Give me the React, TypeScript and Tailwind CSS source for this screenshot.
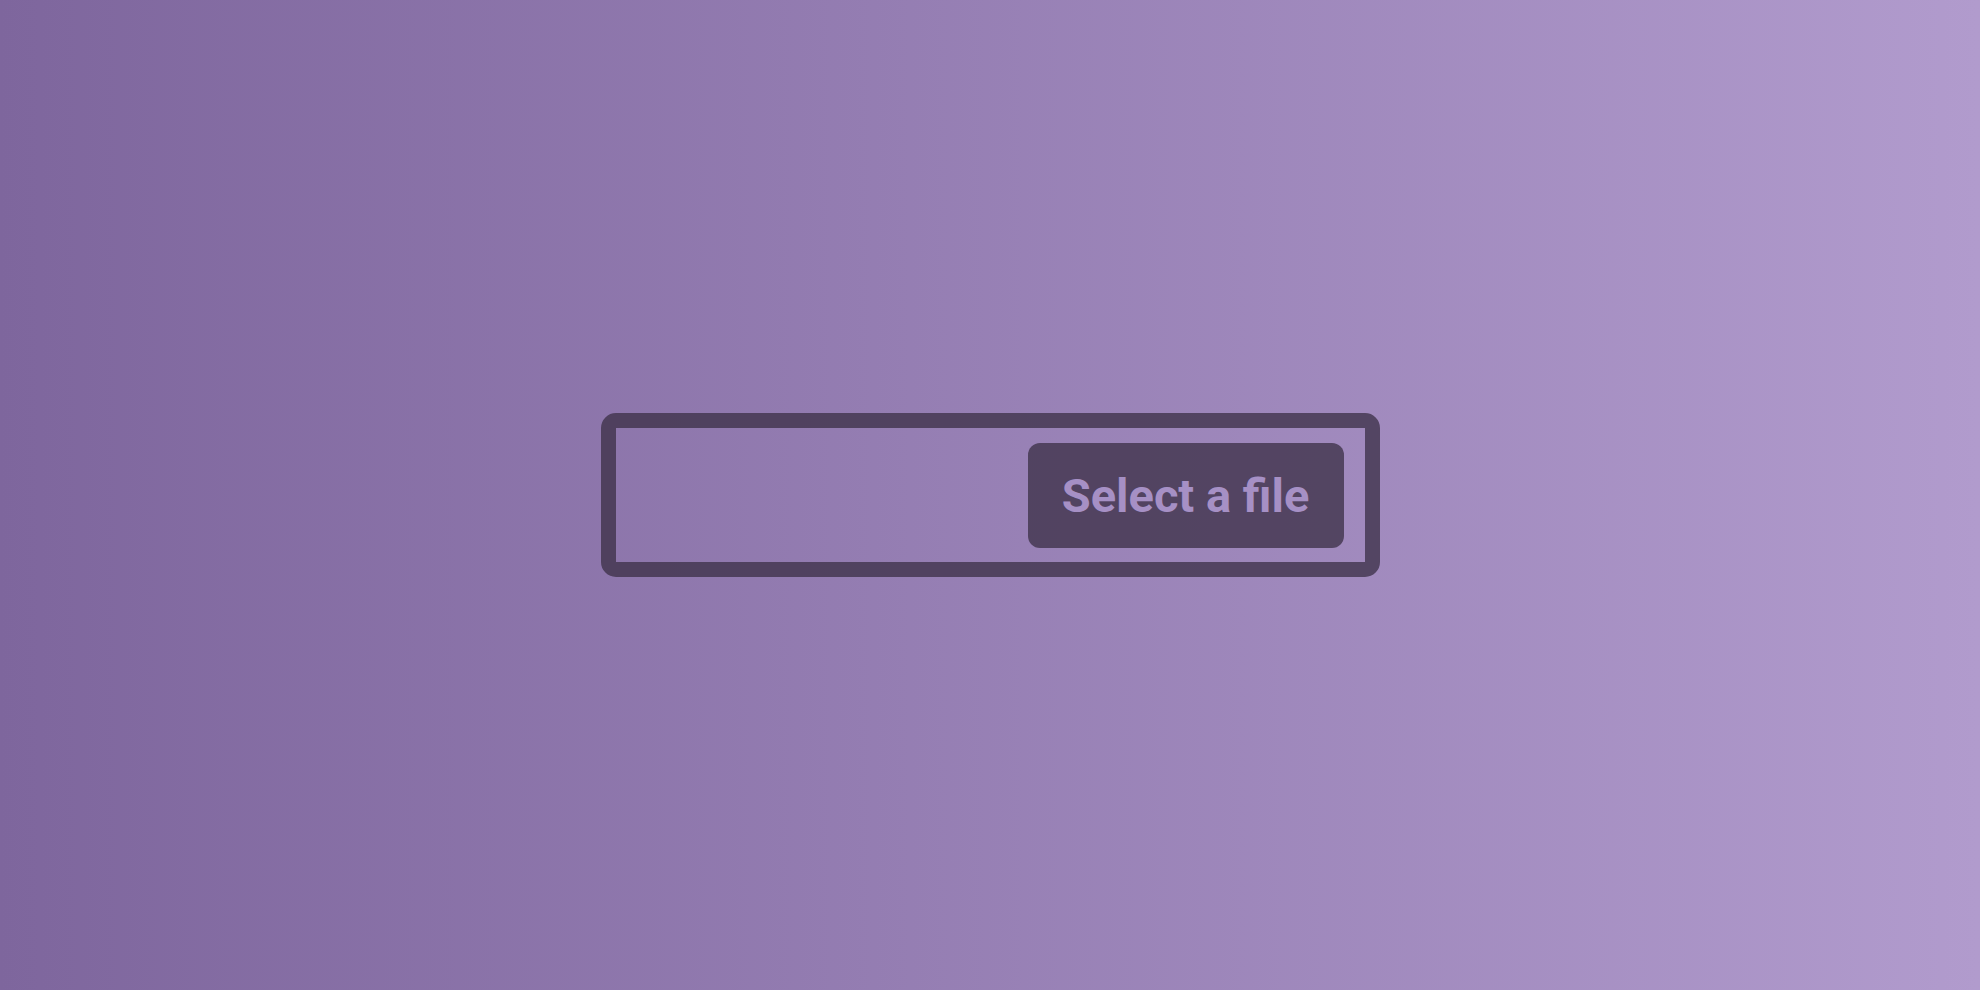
export default function App() {
  return (
    <div className="flex min-h-screen w-full items-center justify-center bg-gradient-to-r from-[#7e669d] to-[#b19bcd]">
      <div className="flex h-[164px] w-[779px] items-center justify-end rounded-[15px] border-[15px] border-[rgba(59,47,70,0.76)] pr-[21px]">
        <button
          type="button"
          className="flex h-[105px] w-[316px] items-center justify-center rounded-[12px] bg-[rgba(59,47,70,0.76)] text-[47px] leading-none font-bold text-[#a690c5] [font-family:Roboto,'Liberation_Sans',sans-serif]"
        >
          Select a file
        </button>
      </div>
    </div>
  )
}
